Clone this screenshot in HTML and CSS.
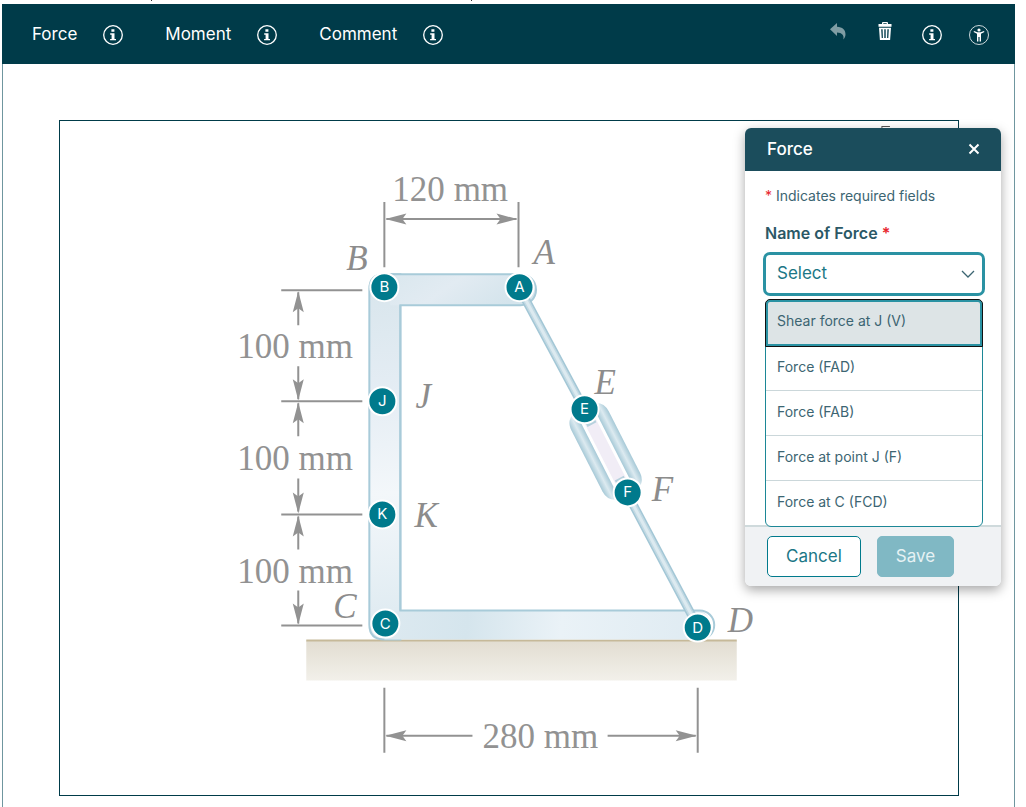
FILE: index.html
```html
<!DOCTYPE html>
<html lang="en">
<head>
<meta charset="utf-8">
<title>Free-body diagram</title>
<link rel="stylesheet" href="styles.css">
</head>
<body>
<svg class="sprite" aria-hidden="true">
  <symbol id="info" viewBox="0 0 20 20">
    <circle cx="10" cy="10" r="9.300" fill="none" stroke="currentColor" stroke-width="1.300"/>
    <path fill="currentColor" d="M8.4 4.200h3v2.500h-3zM7.200 8.300h4.300v5.600H13v1.400H7.100v-1.400h1.500V9.700H7.200z"/>
  </symbol>
</svg>
<div class="scroll-edge" aria-hidden="true"><i class="tick"></i><i class="tick"></i></div>
<div class="app">
  <header class="toolbar">
    <div class="tool"><button class="tool-name">Force</button><button class="icon-btn" aria-label="About force"><svg class="icon"><use href="#info"/></svg></button></div>
    <div class="tool"><button class="tool-name">Moment</button><button class="icon-btn" aria-label="About moment"><svg class="icon"><use href="#info"/></svg></button></div>
    <div class="tool"><button class="tool-name">Comment</button><button class="icon-btn" aria-label="About comment"><svg class="icon"><use href="#info"/></svg></button></div>
    <div class="actions">
      <button class="icon-btn raised faded" aria-label="Undo"><svg class="icon" viewBox="0 0 20 20"><path fill="currentColor" d="M2 8.200 9 2v3.700c5.500.3 8.500 3.200 8.500 7.500 0 2.300-1 4.200-2.200 5.300 1-4.500-1.300-6.900-6.300-7.100v3.500z"/></svg></button>
      <button class="icon-btn raised" aria-label="Delete"><svg class="icon" viewBox="0 0 20 20"><path fill="currentColor" fill-rule="evenodd" d="M7 2q0-1 1-1h4q1 0 1 1v1h3.500v2.800h-13V3H7zM8.300 2.200V3h3.400v-.8zM4 6.800h12l-.9 12.200H4.900zM6.200 8.300l.5 8.800h1.200l-.3-8.800zM9.300 8.300v8.800h1.400V8.300zM12.400 8.300l-.3 8.800h1.200l.5-8.800z"/></svg></button>
      <button class="icon-btn" aria-label="Help"><svg class="icon"><use href="#info"/></svg></button>
      <button class="icon-btn" aria-label="Accessibility"><svg class="icon" viewBox="0 0 20 20"><circle cx="10" cy="10" r="9.500" fill="none" stroke="currentColor" stroke-width=".8"/><circle cx="10" cy="5" r="1.600" fill="currentColor"/><path fill="currentColor" d="M5 6 8.500 7.300h3L15 6l.4 1-3.400 1.700v7.800h-1.400v-4.500H9.400v4.500H8V8.700L4.600 7z"/></svg></button>
    </div>
  </header>

  <main class="workspace">
    <div class="canvas">
      <svg class="drawing" viewBox="60 121 897 673" role="img" aria-label="Frame with tension rod and turnbuckle">
        <defs>
          <linearGradient id="column" gradientUnits="userSpaceOnUse" x1="370" y1="290" x2="398" y2="640">
            <stop offset="0" stop-color="#d9e6ed"/><stop offset=".3" stop-color="#e5edf4"/><stop offset=".58" stop-color="#f3f7fa"/><stop offset="1" stop-color="#dce9f0"/>
          </linearGradient>
          <linearGradient id="base" gradientUnits="userSpaceOnUse" x1="390" y1="610" x2="700" y2="636">
            <stop offset="0" stop-color="#dce9f0"/><stop offset=".25" stop-color="#d5e5ed"/><stop offset=".55" stop-color="#eaf2f7"/><stop offset="1" stop-color="#dfebf2"/>
          </linearGradient>
          <linearGradient id="top" x1="0" y1="0" x2="1" y2=".3">
            <stop offset="0" stop-color="#d9e7ee"/><stop offset=".5" stop-color="#e2ebf2"/><stop offset="1" stop-color="#d4e4ec"/>
          </linearGradient>
          <linearGradient id="ground" x1="0" y1="0" x2="0" y2="1">
            <stop offset="0" stop-color="#e2ddd1"/><stop offset="1" stop-color="#f2f0ea"/>
          </linearGradient>
          <linearGradient id="bar" x1="0" y1="0" x2="1" y2="0">
            <stop offset="0" stop-color="#a6c9d7"/><stop offset=".5" stop-color="#dceaf0"/><stop offset="1" stop-color="#a6c9d7"/>
          </linearGradient>
          <path id="arrow" d="M0 0-5.500 21 0 17 5.500 21z"/>
        </defs>

        <path class="stray" d="M881 128v-1.500h8"/>

        <path fill="url(#ground)" d="M306 640h430v40H306z"/>
        <path class="ground-line" d="M306 640h430"/>
        <path class="member" fill="url(#column)" d="M384 274q-15 0-15 15v335q0 15 15 15h16V274z"/>
        <path fill="url(#base)" d="M390 610h309a15 15 0 0 1 0 29H384z"/>
        <path fill="url(#top)" d="M384 274h136a15 15 0 0 1 0 31H390z"/>
        <path class="edge" d="M384 274h136a15.500 15.500 0 0 1 0 31H400v305h299a14.500 14.500 0 0 1 0 29"/>

        <path class="rod-edge" d="M520 290 584 409M626 492l70 132"/>
        <path class="rod-mid" d="M520 290 584 409M626 492l70 132"/>
        <path class="rod-light" d="M520 290 584 409M626 492l70 132"/>

        <g transform="translate(605 451) rotate(-27)">
          <rect class="hole" x="-11" y="-46" width="22" height="92"/>
          <rect class="screw" x="-6" y="-40" width="12" height="80"/>
          <path class="thread" d="M-5-30H5v-6H-5zM-5 30H5v6H-5z"/>
          <path fill="url(#bar)" d="M-9-49v98q-12-3-12-15v-68q0-12 12-15z"/>
          <path fill="url(#bar)" d="M9-49v98q12-3 12-15v-68q0-12-12-15z"/>
        </g>

        <g class="dimension">
          <path d="M384 202v65M518 202v65M386 219h130M384 687v65M697 687v65M386 735h86M607 735h88"/>
          <path d="M281 290h81M281 401h81M281 514h81M281 625h81"/>
          <path d="M298 292v33M298 366v33M298 403v33M298 478v33M298 516v33M298 590v33"/>
        </g>
        <g class="heads">
          <use href="#arrow" transform="translate(298 291)"/>
          <use href="#arrow" transform="translate(298 400) rotate(180)"/>
          <use href="#arrow" transform="translate(298 402)"/>
          <use href="#arrow" transform="translate(298 513) rotate(180)"/>
          <use href="#arrow" transform="translate(298 515)"/>
          <use href="#arrow" transform="translate(298 624) rotate(180)"/>
          <use href="#arrow" transform="translate(385 219) rotate(-90)"/>
          <use href="#arrow" transform="translate(517 219) rotate(90)"/>
          <use href="#arrow" transform="translate(385 735) rotate(-90)"/>
          <use href="#arrow" transform="translate(696 735) rotate(90)"/>
        </g>
        <g class="measure">
          <text x="392" y="201">120 mm</text>
          <text x="237" y="358">100 mm</text>
          <text x="237" y="470">100 mm</text>
          <text x="237" y="582">100 mm</text>
          <text x="482" y="747">280 mm</text>
        </g>
        <g class="point">
          <text x="346" y="270">B</text><text x="533" y="264">A</text><text x="415" y="408">J</text><text x="414" y="527">K</text>
          <text x="333" y="617">C</text><text x="727" y="631">D</text><text x="594" y="394">E</text><text x="651" y="501">F</text>
        </g>
        <g class="pins">
          <circle cx="384" cy="287" r="14"/><text x="384" y="292">B</text>
          <circle cx="519" cy="287" r="14"/><text x="519" y="292">A</text>
          <circle cx="382" cy="401" r="14"/><text x="382" y="406">J</text>
          <circle cx="382" cy="514" r="14"/><text x="382" y="519">K</text>
          <circle cx="385" cy="623" r="14"/><text x="385" y="628">C</text>
          <circle cx="697" cy="627" r="14"/><text x="697" y="632">D</text>
          <circle cx="584" cy="409" r="14"/><text x="584" y="414">E</text>
          <circle cx="627" cy="492" r="14"/><text x="627" y="497">F</text>
        </g>
      </svg>
    </div>

    <form class="panel" role="dialog" aria-labelledby="panel-title">
      <div class="panel-head">
        <h2 class="panel-title" id="panel-title">Force</h2>
        <button class="close" type="button" aria-label="Close"><svg class="close-icon" viewBox="0 0 12 12"><path d="m1.500 1.500 9 9m0-9-9 9" stroke="currentColor" stroke-width="2"/></svg></button>
      </div>
      <div class="panel-body">
        <p class="hint"><span class="star">*</span> Indicates required fields</p>
        <label class="label" for="force-name">Name of Force <span class="star">*</span></label>
        <div class="picker">
          <select class="select" id="force-name"><option>Select</option></select>
          <svg class="chevron" viewBox="0 0 14 8"><path d="m1 1 6 6 6-6" fill="none" stroke="currentColor" stroke-width="1.300"/></svg>
          <ul class="options" role="listbox" aria-label="Name of Force">
            <li class="option active" role="option" aria-selected="true">Shear force at J (V)</li>
            <li class="option" role="option">Force (FAD)</li>
            <li class="option" role="option">Force (FAB)</li>
            <li class="option" role="option">Force at point J (F)</li>
            <li class="option" role="option">Force at C (FCD)</li>
          </ul>
        </div>
      </div>
      <div class="panel-foot">
        <button class="btn" type="button">Cancel</button>
        <button class="btn save" type="submit" disabled>Save</button>
      </div>
    </form>
  </main>
</div>
</body>
</html>
```
FILE: styles.css
```css
* { box-sizing: border-box; }
body {
  margin: 0 11px 0 2px;
  min-height: 100vh;
  display: flex;
  flex-direction: column;
  background: #fff;
  color: #3c6572;
  font-family: Inter, "Liberation Sans", sans-serif;
  font-size: 17px;
}
button { font: inherit; color: inherit; background: none; border: 0; padding: 0; cursor: pointer; }
.sprite { position: absolute; width: 0; height: 0; }

.scroll-edge { height: 4px; display: flex; gap: 319px; padding-left: 149px; }
.tick { width: 1px; height: 1px; background: #333; }

.app { flex: 1; border: 1px solid #6f969f; border-width: 0 1px; }
.toolbar {
  margin: 0 -1px;
  height: 60px;
  padding: 0 26px 0 30px;
  display: flex;
  align-items: center;
  gap: 42px;
  background: #003b49;
  color: #fff;
}
.tool { display: flex; align-items: center; gap: 26px; }
.actions { margin-left: auto; display: flex; gap: 27px; }
.icon-btn { width: 20px; height: 20px; margin-top: 2px; }
.raised { margin-top: -2px; }
.faded { opacity: .5; }
.icon { display: block; width: 20px; height: 20px; }

.workspace { position: relative; padding: 56px 55px 12px 56px; }
.canvas { border: 1px solid #003b49; }
.drawing { display: block; width: 100%; height: auto; }
.stray { fill: none; stroke: #555; }
.ground-line { stroke: #c6b999; stroke-width: 2; }
.member { stroke: #a8cbd9; stroke-width: 2; }
.edge { fill: none; stroke: #a8cbd9; stroke-width: 2; }
.rod-edge { fill: none; stroke: #a3c7d6; stroke-width: 9; }
.rod-mid { fill: none; stroke: #c3dae4; stroke-width: 6; }
.rod-light { fill: none; stroke: #dceaf0; stroke-width: 3; }
.hole { fill: #fff; }
.screw { fill: #f1edf6; }
.thread { fill: #b6d1dd; }
.dimension { fill: none; stroke: #929292; stroke-width: 2; }
.heads { fill: #929292; }
.measure, .point { font-family: "Liberation Serif", serif; font-size: 35px; fill: #929292; }
.point { font-style: italic; fill: #8c8c8c; }
.pins circle { fill: #007a8c; stroke: #fff; stroke-width: 2; }
.pins text { fill: #fff; font-size: 15px; text-anchor: middle; }

.panel {
  position: absolute;
  top: 64px;
  right: 13px;
  width: 256px;
  border-radius: 6px;
  background: #fff;
  box-shadow: 0 4px 12px rgba(0, 0, 0, .35);
}
.panel-head {
  height: 43px;
  padding: 0 20px 2px 22px;
  display: flex;
  align-items: center;
  justify-content: space-between;
  border-radius: 6px 6px 0 0;
  background: #1b4d5c;
  color: #fff;
}
.panel-title { margin: 0; font-size: 17px; font-weight: 500; }
.close-icon { display: block; width: 14px; height: 12px; }
.panel-body { height: 354px; padding: 15px 16px 0 18px; }
.hint { margin: 0; padding-left: 2px; font-size: 14px; line-height: 20px; }
.star { color: #e8262d; }
.label { display: block; padding: 15px 2px 7px; font-size: 16px; font-weight: 600; line-height: 24px; color: #2b5866; }
.picker { position: relative; }
.select {
  appearance: none;
  display: block;
  width: 100%;
  height: 44px;
  padding: 0 11px 2px;
  border: 3px solid #2a92a3;
  border-radius: 7px;
  background: #fff;
  color: #1b7786;
  font: inherit;
}
.chevron { position: absolute; right: 10px; top: 18px; width: 14px; height: 8px; pointer-events: none; }
.options {
  position: absolute;
  top: 47px;
  left: 2px;
  right: 2px;
  margin: 0;
  padding: 0;
  list-style: none;
  background: #fff;
  border: 1px solid #1c8796;
  border-radius: 6px;
  font-size: 14px;
}
.option { height: 45px; padding: 0 11px; line-height: 41px; border-bottom: 1px solid #cbd7da; }
.option:last-child { border: 0; }
.active {
  height: 46px;
  padding: 0 9px;
  line-height: 38px;
  border: 2px solid #2a92a3;
  border-radius: 4px 4px 0 0;
  background: #dde4e6;
  outline: 1px solid #111;
}
.panel-foot {
  padding: 9px 22px;
  display: flex;
  gap: 16px;
  border-top: 2px solid #cfdadc;
  border-radius: 0 0 6px 6px;
  background: #f0f2f4;
}
.btn { height: 41px; padding: 0 18px 2px; border: 1px solid #007a8c; border-radius: 5px; background: #fff; color: #1b7786; }
.save { border-color: #80b8c4; background: #80b8c4; color: #e6f2f4; }
```
